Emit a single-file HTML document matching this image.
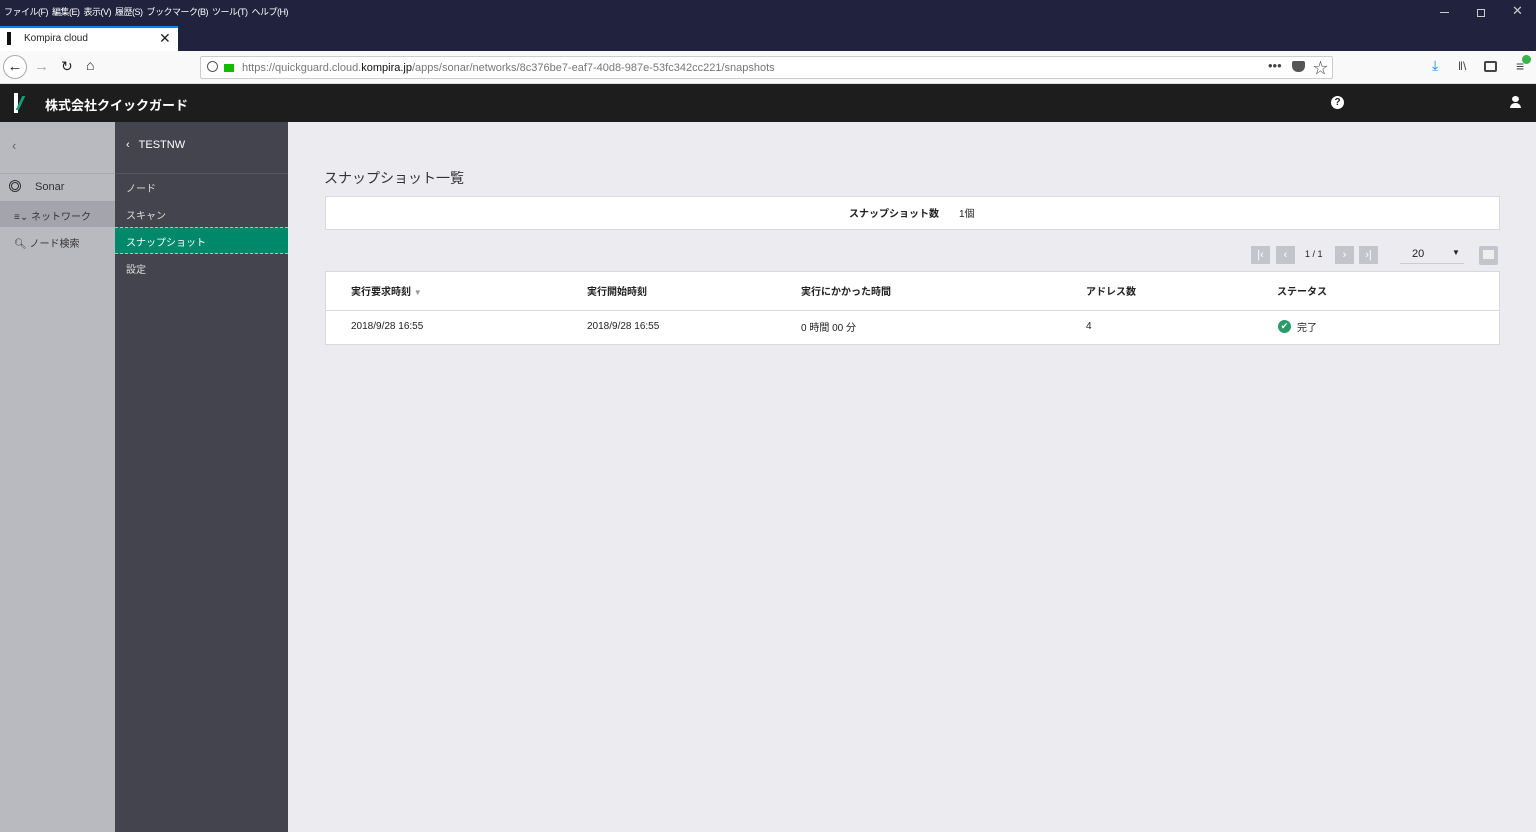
<!DOCTYPE html>
<html><head><meta charset="utf-8"><style>
*{margin:0;padding:0;box-sizing:border-box}
body{width:1536px;height:832px;overflow:hidden;font-family:"Liberation Sans","Noto Sans CJK JP",sans-serif;background:#ebebf0;position:relative;font-size:11px;color:#222}
.a{position:absolute}
</style></head><body>
<div class="a" style="left:0;top:0;width:1536px;height:51px;background:#20223e"></div>
<div class="a" style="left:4px;top:5px;color:#fff;font-size:9px;word-spacing:2px;letter-spacing:-0.5px">ファイル(F) 編集(E) 表示(V) 履歴(S) ブックマーク(B) ツール(T) ヘルプ(H)</div>
<div class="a" style="left:1440px;top:12px;width:9px;height:1px;background:#ccc"></div>
<div class="a" style="left:1477px;top:9px;width:8px;height:8px;border:1px solid #ccc"></div>
<div class="a" style="left:1512px;top:3px;color:#ccc;font-size:13px">✕</div>
<div class="a" style="left:0;top:26px;width:178px;height:26px;background:#fff;border-top:2px solid #0a84ff"></div>
<div class="a" style="left:7px;top:32px;width:4px;height:13px;background:#111"></div>
<div class="a" style="left:24px;top:33px;font-size:10px">Kompira cloud</div>
<div class="a" style="left:159px;top:30px;font-size:14px">✕</div>
<div class="a" style="left:0;top:51px;width:1536px;height:33px;background:#f9f9fa;border-bottom:1px solid #ddd"></div>
<div class="a" style="left:3px;top:55px;width:24px;height:24px;border:1px solid #aaa;border-radius:50%;background:#fff;text-align:center;line-height:22px;font-size:15px">←</div>
<div class="a" style="left:34px;top:58px;font-size:15px;color:#aaa">→</div>
<div class="a" style="left:61px;top:58px;font-size:14px">↻</div>
<div class="a" style="left:86px;top:57px;font-size:14px">⌂</div>
<div class="a" style="left:200px;top:56px;width:1133px;height:23px;background:#fff;border:1px solid #ccc;border-radius:2px"></div>
<div class="a" style="left:207px;top:61px;width:11px;height:11px;border:1px solid #555;border-radius:50%"></div>
<div class="a" style="left:224px;top:64px;width:10px;height:8px;background:#12bc00"></div>
<div class="a" style="left:242px;top:62px;font-size:11px;color:#777">https://quickguard.cloud.<span style="color:#111">kompira.jp</span>/apps/sonar/networks/8c376be7-eaf7-40d8-987e-53fc342cc221/snapshots</div>
<div class="a" style="left:1268px;top:58px;font-size:13px;color:#444">•••</div>
<div class="a" style="left:1292px;top:61px;width:13px;height:11px;background:#555;border-radius:2px 2px 6px 6px"></div>
<div class="a" style="left:1313px;top:57px;font-size:15px;color:#444">☆</div>
<div class="a" style="left:1432px;top:57px;font-size:14px;color:#0a84ff">⤓</div>
<div class="a" style="left:1458px;top:59px;font-size:12px;color:#444">ǁ\</div>
<div class="a" style="left:1484px;top:61px;width:13px;height:11px;border:2px solid #444;border-radius:2px"></div>
<div class="a" style="left:1516px;top:58px;font-size:14px;color:#444">≡</div>
<div class="a" style="left:1522px;top:55px;width:9px;height:9px;border-radius:50%;background:#3ab34a"></div>
<div class="a" style="left:0;top:84px;width:1536px;height:38px;background:#1d1d1d"></div>
<div class="a" style="left:14px;top:93px;width:4px;height:20px;background:#fff"></div>
<div class="a" style="left:19px;top:96px;width:14px;height:14px;border-left:3px solid #10a07a;transform:skewX(-25deg)"></div>
<div class="a" style="left:45px;top:95px;color:#fff;font-size:13px;font-weight:bold">株式会社クイックガード</div>
<div class="a" style="left:1331px;top:96px;width:13px;height:13px;border-radius:50%;background:#fff;color:#1d1d1d;font-size:10px;font-weight:bold;text-align:center;line-height:13px">?</div>
<div class="a" style="left:1512px;top:96px;width:7px;height:6px;border-radius:50%;background:#fff"></div>
<div class="a" style="left:1510px;top:103px;width:11px;height:5px;border-radius:5px 5px 0 0;background:#fff"></div>
<div class="a" style="left:0;top:122px;width:115px;height:710px;background:#b9b9c0"></div>
<div class="a" style="left:12px;top:138px;color:#666;font-size:13px">‹</div>
<div class="a" style="left:0;top:173px;width:115px;height:1px;background:#aaa"></div>
<div class="a" style="left:9px;top:180px;width:12px;height:12px;border:3px double #333;border-radius:50%"></div>
<div class="a" style="left:35px;top:181px;font-size:11px;color:#333">Sonar</div>
<div class="a" style="left:0;top:201px;width:115px;height:26px;background:#a4a4ac"></div>
<div class="a" style="left:14px;top:208px;font-size:10px;color:#333">≡⌄ ネットワーク</div>
<div class="a" style="left:14px;top:235px;font-size:10px;color:#333">🔍︎ ノード検索</div>
<div class="a" style="left:115px;top:122px;width:173px;height:710px;background:#44444f"></div>
<div class="a" style="left:126px;top:139px;color:#fff;font-size:11px">‹&nbsp;&nbsp; TESTNW</div>
<div class="a" style="left:115px;top:173px;width:173px;height:1px;background:#55555f"></div>
<div class="a" style="left:126px;top:180px;color:#ddd;font-size:10px">ノード</div>
<div class="a" style="left:126px;top:207px;color:#ddd;font-size:10px">スキャン</div>
<div class="a" style="left:115px;top:227px;width:173px;height:27px;background:#00886a;border-top:1px dashed #bbb;border-bottom:1px dashed #bbb"></div>
<div class="a" style="left:126px;top:234px;color:#fff;font-size:10px">スナップショット</div>
<div class="a" style="left:126px;top:261px;color:#ddd;font-size:10px">設定</div>
<div class="a" style="left:324px;top:168px;font-size:14px;color:#333">スナップショット一覧</div>
<div class="a" style="left:325px;top:196px;width:1175px;height:34px;background:#fff;border:1px solid #d8d8de"></div>
<div class="a" style="left:849px;top:205px;font-size:10px;font-weight:bold">スナップショット数</div>
<div class="a" style="left:959px;top:205px;font-size:10px">1個</div>
<div class="a" style="left:1251px;top:246px;width:19px;height:18px;background:#c4c4cc;color:#fff;text-align:center;line-height:18px">|‹</div>
<div class="a" style="left:1276px;top:246px;width:19px;height:18px;background:#c4c4cc;color:#fff;text-align:center;line-height:18px">‹</div>
<div class="a" style="left:1305px;top:249px;font-size:9px">1 / 1</div>
<div class="a" style="left:1335px;top:246px;width:19px;height:18px;background:#c4c4cc;color:#fff;text-align:center;line-height:18px">›</div>
<div class="a" style="left:1359px;top:246px;width:19px;height:18px;background:#c4c4cc;color:#fff;text-align:center;line-height:18px">›|</div>
<div class="a" style="left:1400px;top:246px;width:64px;height:18px;border-bottom:1px solid #ccc"></div>
<div class="a" style="left:1412px;top:248px;font-size:11px">20</div>
<div class="a" style="left:1452px;top:248px;font-size:8px">▼</div>
<div class="a" style="left:1479px;top:246px;width:19px;height:19px;background:#c4c4cc;border-radius:2px"></div>
<div class="a" style="left:1483px;top:250px;width:11px;height:9px;background:#eee"></div>
<div class="a" style="left:325px;top:271px;width:1175px;height:74px;background:#fff;border:1px solid #d8d8de"></div>
<div class="a" style="left:325px;top:310px;width:1175px;height:1px;background:#d8d8de"></div>
<div class="a" style="left:351px;top:283px;font-size:10px;font-weight:bold">実行要求時刻 <span style="color:#999;font-size:8px">▼</span></div>
<div class="a" style="left:587px;top:283px;font-size:10px;font-weight:bold">実行開始時刻</div>
<div class="a" style="left:801px;top:283px;font-size:10px;font-weight:bold">実行にかかった時間</div>
<div class="a" style="left:1086px;top:283px;font-size:10px;font-weight:bold">アドレス数</div>
<div class="a" style="left:1277px;top:283px;font-size:10px;font-weight:bold">ステータス</div>
<div class="a" style="left:351px;top:321px;font-size:10px">2018/9/28 16:55</div>
<div class="a" style="left:587px;top:321px;font-size:10px">2018/9/28 16:55</div>
<div class="a" style="left:801px;top:319px;font-size:10px">0 時間 00 分</div>
<div class="a" style="left:1086px;top:321px;font-size:10px">4</div>
<div class="a" style="left:1278px;top:320px;width:13px;height:13px;border-radius:50%;background:#2a9a6a;color:#fff;font-size:9px;text-align:center;line-height:13px">✔</div>
<div class="a" style="left:1297px;top:319px;font-size:10px">完了</div>
</body></html>
